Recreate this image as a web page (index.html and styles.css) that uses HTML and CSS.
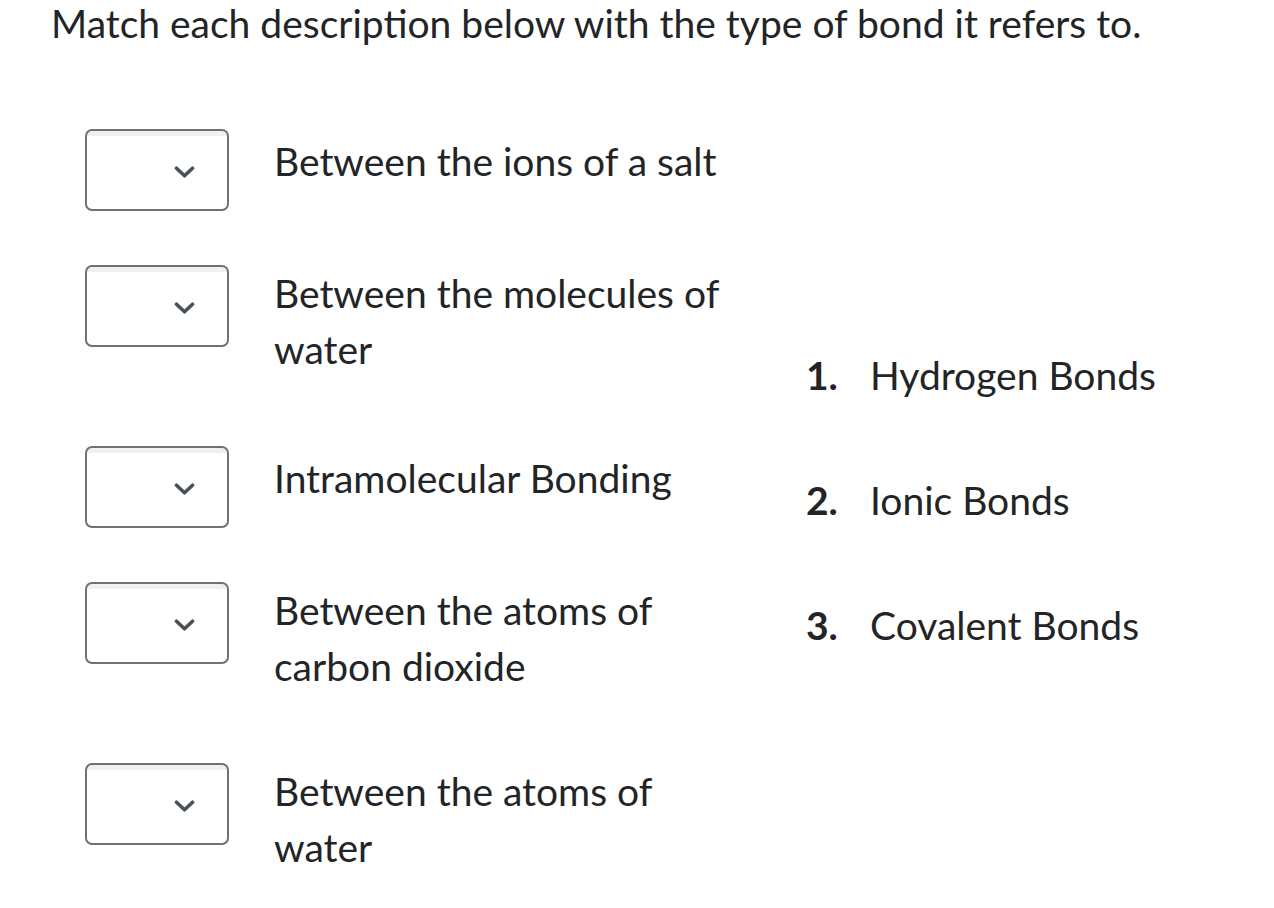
FILE: index.html
```html
<!DOCTYPE html>
<html lang="en">
<head>
<meta charset="utf-8">
<title>Matching question</title>
<link rel="stylesheet" href="styles.css">
</head>
<body>
<main class="question">
  <h1 class="prompt">Match each description below with the type of bond it refers to.</h1>
  <div class="matching">
    <div class="pairs">
      <div class="pair">
        <button class="select" type="button" aria-label="Choose answer">
          <svg class="chevron" viewBox="0 0 21 12" width="21" height="12"><path d="M2.5 2.2 L10.5 9.8 L18.5 2.2" /></svg>
        </button>
        <p class="desc desc-single">Between the ions of a salt</p>
      </div>
      <div class="pair">
        <button class="select" type="button" aria-label="Choose answer">
          <svg class="chevron" viewBox="0 0 21 12" width="21" height="12"><path d="M2.5 2.2 L10.5 9.8 L18.5 2.2" /></svg>
        </button>
        <p class="desc">Between the molecules of water</p>
      </div>
      <div class="pair">
        <button class="select" type="button" aria-label="Choose answer">
          <svg class="chevron" viewBox="0 0 21 12" width="21" height="12"><path d="M2.5 2.2 L10.5 9.8 L18.5 2.2" /></svg>
        </button>
        <p class="desc desc-single">Intramolecular Bonding</p>
      </div>
      <div class="pair">
        <button class="select" type="button" aria-label="Choose answer">
          <svg class="chevron" viewBox="0 0 21 12" width="21" height="12"><path d="M2.5 2.2 L10.5 9.8 L18.5 2.2" /></svg>
        </button>
        <p class="desc">Between the atoms of carbon dioxide</p>
      </div>
      <div class="pair">
        <button class="select" type="button" aria-label="Choose answer">
          <svg class="chevron" viewBox="0 0 21 12" width="21" height="12"><path d="M2.5 2.2 L10.5 9.8 L18.5 2.2" /></svg>
        </button>
        <p class="desc">Between the atoms of water</p>
      </div>
    </div>
    <ol class="answers">
      <li><span class="num">1.</span><span>Hydrogen Bonds</span></li>
      <li><span class="num">2.</span><span>Ionic Bonds</span></li>
      <li><span class="num">3.</span><span>Covalent Bonds</span></li>
    </ol>
  </div>
</main>
</body>
</html>
```

FILE: styles.css
```css
html, body {
  margin: 0;
  padding: 0;
  background: #ffffff;
}

body {
  font-family: Lato, "Noto Sans", sans-serif;
  color: #222426;
  font-size: 39px;
}

.question {
  padding: 0 0 0 51px;
}

.prompt {
  margin: 0;
  font-size: 39px;
  font-weight: 400;
  line-height: 47px;
}

.matching {
  display: flex;
  align-items: center;
  margin-top: 82px;
  padding-left: 34px;
}

.pairs {
  display: flex;
  flex-direction: column;
  gap: 54px;
}

.pair {
  display: flex;
  align-items: flex-start;
  gap: 45px;
}

/* closed dropdown: light band along the top edge, chevron on the right */
.select {
  flex: none;
  width: 144px;
  height: 82px;
  padding: 3px 32px 0 0;
  border: 2px solid #6d7276;
  border-radius: 7px;
  background: linear-gradient(#eef0f1 0, #eef0f1 5px, #ffffff 5px);
  box-sizing: border-box;
  display: flex;
  align-items: center;
  justify-content: flex-end;
}

.chevron path {
  fill: none;
  stroke: #4a5157;
  stroke-width: 3.6;
  stroke-linecap: round;
  stroke-linejoin: round;
}

.desc {
  margin: 0;
  width: 460px;
  line-height: 56px;
  padding-bottom: 15px;
}

.pair:last-child .desc {
  padding-bottom: 0;
}

.desc-single {
  padding-top: 4px;
}

.answers {
  list-style: none;
  margin: 0 0 4px 72px;
  padding: 0;
  display: flex;
  flex-direction: column;
  gap: 69px;
}

.answers li {
  display: flex;
  line-height: 56px;
}

.num {
  font-weight: 700;
  width: 64px;
}
```
